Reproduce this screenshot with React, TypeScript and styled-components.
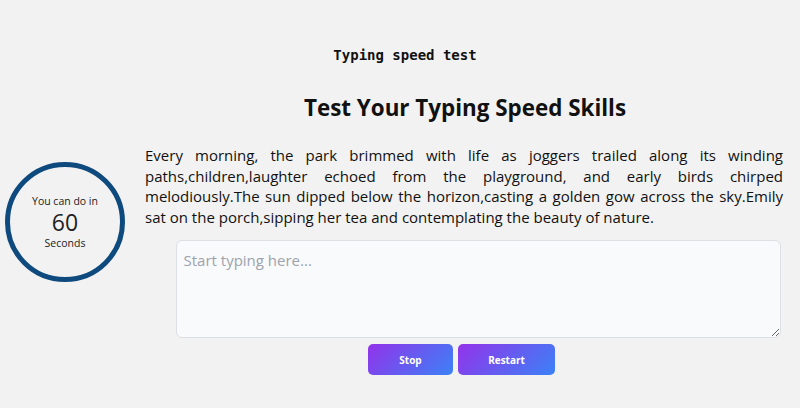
import React from "react";
import styled, { createGlobalStyle } from "styled-components";

const GlobalStyle = createGlobalStyle`
  body {
    margin: 0;
    background: #f2f2f2;
    font-family: "Open Sans", "Noto Sans", sans-serif;
    color: #111;
  }
`;

const Page = styled.div`
  display: flex;
  flex-direction: column;
  width: 800px;
  height: 408px;
  box-sizing: border-box;
  padding-top: 47px;
`;

const AppTitle = styled.h1`
  margin: 0 0 29px 10px;
  text-align: center;
  font-family: "DejaVu Sans Mono", "Liberation Mono", monospace;
  font-size: 14px;
  font-weight: bold;
`;

const Main = styled.div`
  display: flex;
  flex-direction: row;
  align-items: flex-start;
`;

const TimerRing = styled.div`
  flex: none;
  width: 110px;
  height: 110px;
  margin: 70px 20px 0 5px;
  border: 5px solid #0e4a7d;
  border-radius: 50%;
  display: flex;
  flex-direction: column;
  align-items: center;
  justify-content: center;
  color: #222;
`;

const TimerLabel = styled.span`
  font-size: 10.5px;
  line-height: 14px;
`;

const TimerValue = styled.span`
  font-size: 23px;
  line-height: 28px;
`;

const Content = styled.div`
  width: 638px;
  display: flex;
  flex-direction: column;
  align-items: center;
`;

const Heading = styled.h2`
  margin: 0 0 22px 2px;
  font-size: 22.4px;
  font-weight: bold;
  text-align: center;
`;

const Passage = styled.p`
  margin: 0 0 13px 0;
  font-size: 15px;
  line-height: 20.5px;
  text-align: justify;
`;

const TypingArea = styled.textarea`
  box-sizing: border-box;
  width: 605px;
  height: 98px;
  margin-left: 28px;
  padding: 9px 7px;
  border: 1px solid #dcdfe3;
  border-radius: 6px;
  background: #f9fafb;
  font-family: "Open Sans", "Noto Sans", sans-serif;
  font-size: 15px;
  resize: vertical;
  outline: none;

  &::placeholder {
    color: #9ca3af;
  }
`;

const ButtonRow = styled.div`
  display: flex;
  gap: 5px;
  margin-top: 6px;
  margin-right: 5px;
`;

const ActionButton = styled.button<{ $width: number }>`
  width: ${(p) => p.$width}px;
  height: 31px;
  border: none;
  border-radius: 5px;
  background: linear-gradient(135deg, #9333ea 0%, #3b82f6 100%);
  color: #fff;
  font-family: "Open Sans", "Noto Sans", sans-serif;
  font-size: 10px;
  font-weight: bold;
  cursor: pointer;
`;

export default function App() {
  return (
    <>
      <GlobalStyle />
      <Page>
        <AppTitle>Typing speed test</AppTitle>
        <Main>
          <TimerRing>
            <TimerLabel>You can do in</TimerLabel>
            <TimerValue>60</TimerValue>
            <TimerLabel>Seconds</TimerLabel>
          </TimerRing>
          <Content>
            <Heading>Test Your Typing Speed Skills</Heading>
            <Passage>
              Every morning, the park brimmed with life as joggers trailed along its winding
              paths,children,laughter echoed from the playground, and early birds chirped
              melodiously.The sun dipped below the horizon,casting a golden gow across the
              sky.Emily sat on the porch,sipping her tea and contemplating the beauty of nature.
            </Passage>
            <TypingArea placeholder="Start typing here..." />
            <ButtonRow>
              <ActionButton $width={85}>Stop</ActionButton>
              <ActionButton $width={97}>Restart</ActionButton>
            </ButtonRow>
          </Content>
        </Main>
      </Page>
    </>
  );
}
